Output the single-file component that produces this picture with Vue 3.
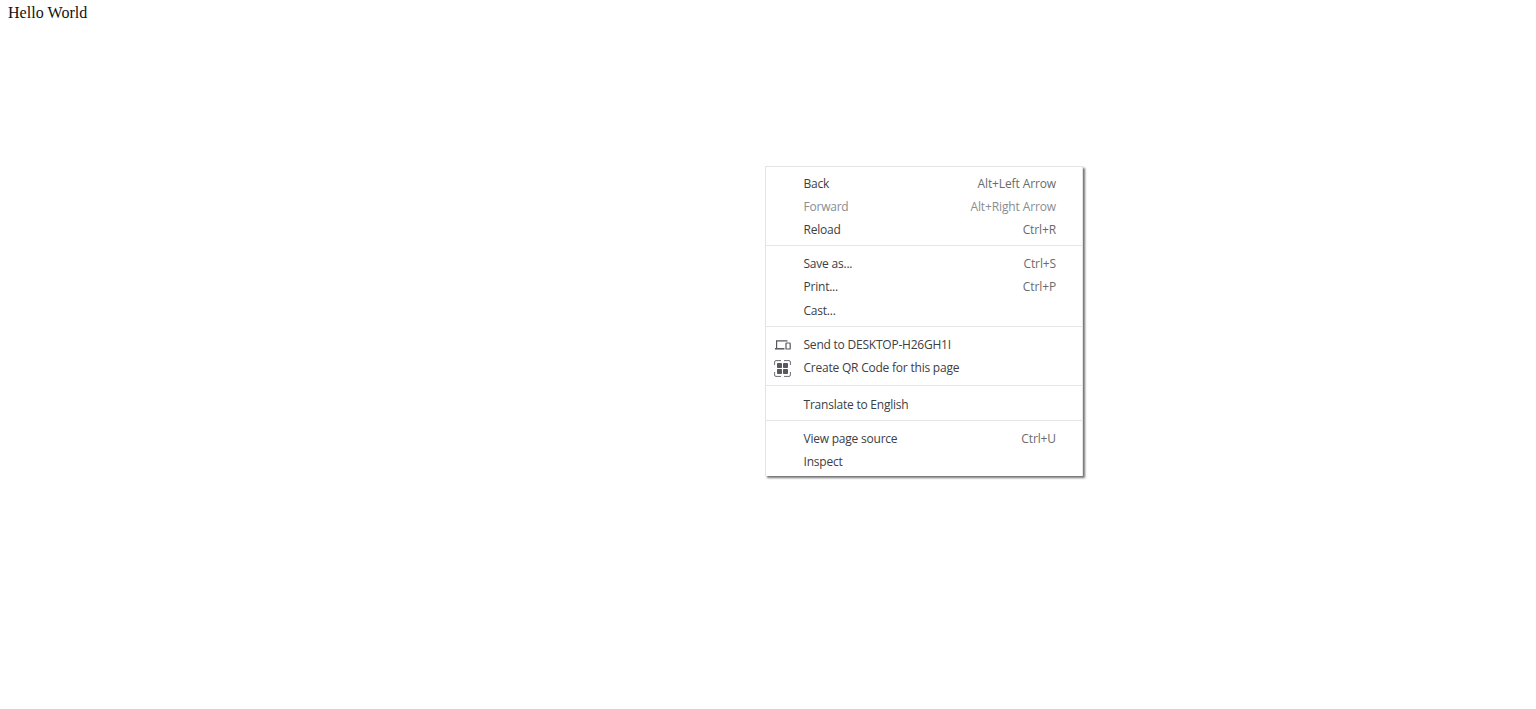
<script setup>
const groups = [
  { cls: 'g1', items: [
    { label: 'Back', key: 'Alt+Left Arrow' },
    { label: 'Forward', key: 'Alt+Right Arrow', disabled: true },
    { label: 'Reload', key: 'Ctrl+R' },
  ] },
  { cls: 'g2', items: [
    { label: 'Save as...', key: 'Ctrl+S' },
    { label: 'Print...', key: 'Ctrl+P' },
    { label: 'Cast...' },
  ] },
  { cls: 'g3', items: [
    { label: 'Send to DESKTOP-H26GH1I', icon: 'device' },
    { label: 'Create QR Code for this page', icon: 'qr' },
  ] },
  { cls: 'g4', items: [{ label: 'Translate to English' }] },
  { cls: 'g5', items: [
    { label: 'View page source', key: 'Ctrl+U' },
    { label: 'Inspect' },
  ] },
]
</script>

<template>
  <div class="page">
    <div class="hello">Hello World</div>
    <div class="menu">
      <div v-for="g in groups" :key="g.cls" class="group" :class="g.cls">
        <div v-for="it in g.items" :key="it.label" class="row" :class="{ disabled: it.disabled }">
          <span class="icon">
            <svg v-if="it.icon === 'device'" width="16" height="10" viewBox="0 0 16 10" fill="none" stroke="#55585c" stroke-width="1.2">
              <path d="M1.6 8.6V.8H12.5" />
              <path d="M0 8.8H9.5" stroke-width="1.5" />
              <rect x="11" y="3" width="4.2" height="6" rx=".6" />
            </svg>
            <svg v-else-if="it.icon === 'qr'" width="17" height="17" viewBox="0 0 17 17" fill="none">
              <path d="M.6 5V2Q.6.6 2 .6H7M10 .6H15Q16.4.6 16.4 2V5M.6 12V15Q.6 16.4 2 16.4H7M10 16.4H15Q16.4 16.4 16.4 15V12" stroke="#6b6e72" />
              <rect x="3" y="3" width="5" height="5" rx=".8" fill="#55585c" />
              <rect x="9" y="3" width="5" height="5" rx=".8" fill="#55585c" />
              <rect x="3" y="9" width="5" height="5" rx=".8" fill="#55585c" />
              <rect x="9" y="9" width="5" height="5" rx=".8" fill="#55585c" />
            </svg>
          </span>
          <span class="label">{{ it.label }}</span>
          <span v-if="it.key" class="key">{{ it.key }}</span>
        </div>
      </div>
    </div>
  </div>
</template>

<style scoped>
.page {
  position: relative;
  height: 709px;
  background: #fff;
  overflow: hidden;
}
.hello {
  padding: 4px 8px 0;
  font: 16px/18px "Liberation Serif", serif;
  letter-spacing: 0.05px;
  color: #111;
}
.menu {
  position: absolute;
  left: 765px;
  top: 166px;
  width: 316px;
  padding-top: 4.5px;
  background: #fff;
  border: 1px solid #e4e4e4;
  border-bottom: 0;
  box-shadow: 2px 2px 2px rgba(0, 0, 0, 0.55);
  font: 12px/23.4px "Open Sans", sans-serif;
  color: #3c4043;
}
.group {
  border-bottom: 1px solid #e6e6e6;
}
.group:last-child {
  border-bottom: 0;
}
.g1 { padding-bottom: 3.3px; }
.g2 { padding-top: 6px; padding-bottom: 3.8px; }
.g3 { padding-top: 6px; padding-bottom: 5.6px; }
.g4 { padding-top: 6.3px; padding-bottom: 4.3px; }
.g5 { padding-top: 5.8px; padding-bottom: 3.8px; }
.row {
  display: flex;
  align-items: center;
  height: 23.4px;
  padding: 0 26px 0 8px;
}
.g5 .row:last-child { height: 22px; }
.icon {
  display: flex;
  align-items: center;
  justify-content: center;
  flex: none;
  width: 18px;
  margin-left: -0.5px;
  margin-right: 12px;
}
.label {
  flex: 1;
  letter-spacing: -0.22px;
}
.key {
  color: #6b6b6b;
  letter-spacing: -0.12px;
}
.disabled .label,
.disabled .key {
  color: #8a8d90;
}
</style>

<style>
html, body { background: #fff; }
</style>
